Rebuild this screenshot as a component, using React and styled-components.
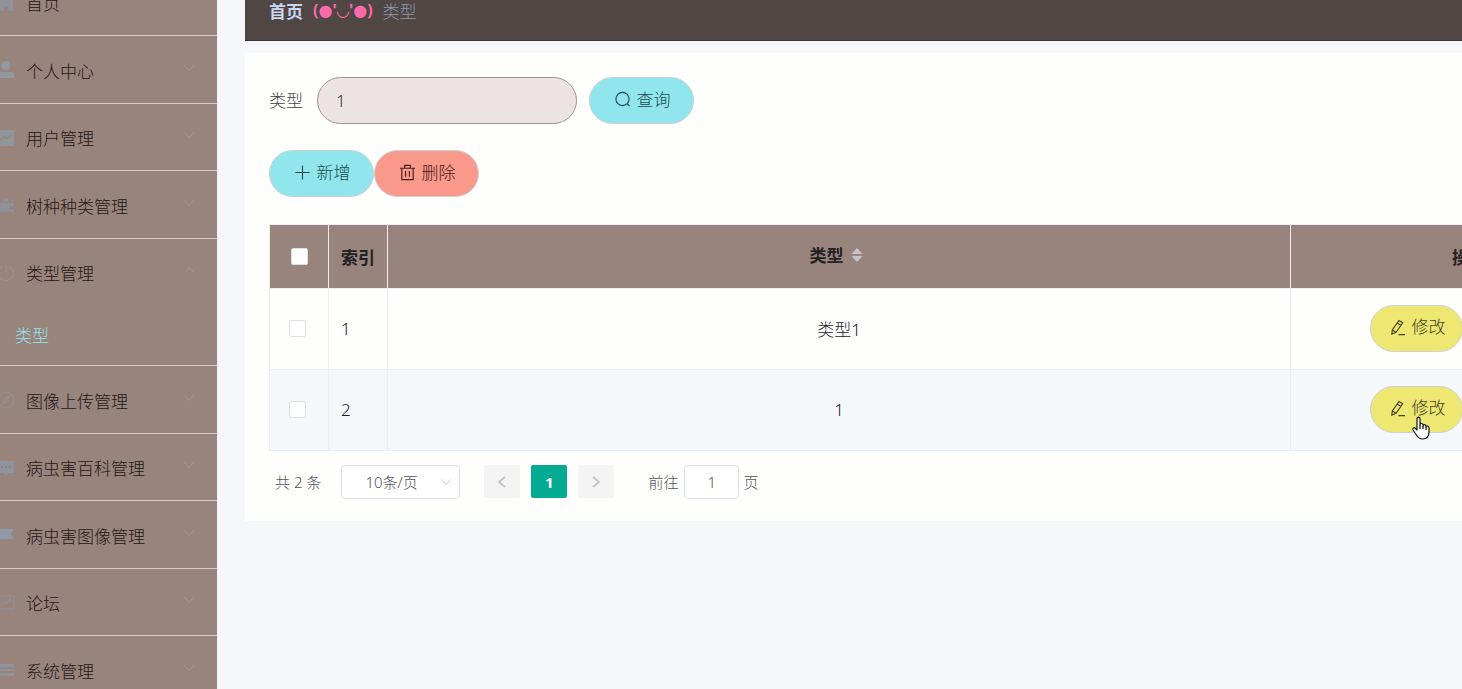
import React from "react";
import styled, { createGlobalStyle, css } from "styled-components";

const colors = {
  brown: "#99837d",
  bar: "#504644",
  aqua: "#90e6ec",
  coral: "#f8998c",
  yellow: "#eee873",
  green: "#02ab92",
  page: "#f6f7fa",
  card: "#fefefd",
  line: "#ebeef5",
};

const GlobalStyle = createGlobalStyle`
  *, *::before, *::after { box-sizing: border-box; }
  body {
    margin: 0;
    overflow: hidden;
    background: ${colors.page};
    color: #222;
    font-family: "Noto Sans", "Noto Sans CJK SC", sans-serif;
    font-size: 17px;
    font-weight: 300;
  }
  button, input, select { font: inherit; color: inherit; }
  svg { display: block; flex: none; }
`;

/* ---------- layout ---------- */

const Viewport = styled.div`
  height: 100vh;
  overflow: hidden;
`;

const Shell = styled.div`
  display: flex;
  width: calc(100% + 210px);
  min-height: 100vh;
`;

const Sidebar = styled.nav`
  flex: none;
  width: 217px;
  height: 100vh;
  overflow: hidden;
  background: ${colors.brown};
`;

const Main = styled.main`
  flex: 1;
  min-width: 0;
  padding-left: 28px;
`;

/* ---------- sidebar ---------- */

const Menu = styled.ul`
  list-style: none;
  margin: -31px 0 0;
  padding: 0;
`;

const MenuItem = styled.li`
  border-bottom: 1px solid #d6cac6;
`;

const MenuLink = styled.a`
  display: flex;
  align-items: center;
  gap: 11px;
  height: ${(p) => (p.$tall ? 67 : 66)}px;
  padding: 1px 23px 0 0;
  margin-left: -3px;
  color: #1f1715;
  text-decoration: none;
  white-space: nowrap;

  > svg:first-child { color: ${(p) => p.$tint}; }
  > svg:last-child { margin: -5px 0 0 auto; color: #a59692; }
`;

const SubLink = styled.a`
  display: flex;
  align-items: center;
  height: 60px;
  padding: 0 0 2px 15px;
  color: ${colors.aqua};
  text-decoration: none;
`;

/* ---------- header ---------- */

const Breadcrumb = styled.header`
  display: flex;
  align-items: center;
  height: 41px;
  padding: 0 24px 20px;
  background: ${colors.bar};
  border-bottom: 1px solid #403635;
  color: #8d99ab;
  white-space: nowrap;
`;

const HomeLink = styled.a`
  color: #c9d6f2;
  font-weight: 700;
  text-decoration: none;
`;

const Face = styled.span`
  margin: 0 10px;
  color: #fb6bab;
  font-family: "Noto Sans", "DejaVu Sans", sans-serif;
  font-size: 16px;
  font-weight: 700;
`;

/* ---------- card ---------- */

const Card = styled.section`
  margin-top: 12px;
  padding: 24px 24px 22px;
  background: ${colors.card};
`;

const Toolbar = styled.div`
  display: flex;
  align-items: center;
  height: 47px;
  margin-bottom: ${(p) => p.$below}px;
`;

const FieldLabel = styled.label`
  margin-right: 14px;
  padding-bottom: 2px;
  color: #444;
`;

const SearchInput = styled.input`
  width: 260px;
  height: 47px;
  margin-right: 12px;
  padding: 0 18px 1px;
  border: 1px solid #a3928f;
  border-radius: 24px;
  background: #ece4e3;
  color: #333;
  outline: none;
`;

const PillButton = styled.button`
  display: inline-flex;
  align-items: center;
  justify-content: center;
  gap: 6px;
  width: ${(p) => p.$width}px;
  height: 47px;
  padding: 0 0 2px 1px;
  border: 1px solid #cfcfd6;
  border-radius: 24px;
  background: ${(p) => p.$fill};
  color: ${(p) => p.$ink};
  line-height: 24px;
  white-space: nowrap;
  cursor: pointer;
`;

const Table = styled.table`
  width: 100%;
  table-layout: fixed;
  border-collapse: collapse;
  border: 1px solid ${colors.line};
`;

const HeadCell = styled.th`
  height: 64px;
  padding: 0 ${(p) => p.$pad || 0}px;
  border: 1px solid ${colors.line};
  border-bottom: 0;
  background: ${colors.brown};
  text-align: ${(p) => p.$align || "center"};
  font-weight: 700;
  white-space: nowrap;
`;

const Cell = styled.td`
  position: relative;
  height: 81px;
  padding: 0 0 2px ${(p) => p.$pad || 0}px;
  border: 1px solid ${colors.line};
  text-align: ${(p) => p.$align || "center"};
`;

const Row = styled.tr`
  background: ${(p) => (p.$striped ? "#f5f8fa" : "transparent")};
`;

const Check = styled.input`
  appearance: none;
  display: block;
  width: 17px;
  height: 17px;
  margin: 0 0 0 ${(p) => p.$inset}px;
  border: 1px solid #dcdfe6;
  border-radius: 2px;
  background: #fff;
`;

const SortButton = styled.button`
  display: inline-flex;
  align-items: center;
  gap: 7px;
  padding: 0 6px 4px 0;
  border: 0;
  background: none;
  font-weight: 700;
`;

const Pointer = styled.svg`
  position: absolute;
  left: 120px;
  top: 46px;
`;

/* ---------- pagination ---------- */

const Pagination = styled.div`
  display: flex;
  align-items: center;
  height: 35px;
  margin-top: 13px;
  padding-left: 6px;
  color: #505256;
  font-size: 15px;
  white-space: nowrap;
`;

const boxed = css`
  height: 34px;
  border: 1px solid #dcdfe6;
  border-radius: 4px;
  background: #fff;
  outline: none;
`;

const SizeWrap = styled.span`
  display: grid;
  align-items: center;
  margin: 0 24px 0 20px;
  color: #c0c4cc;

  > * { grid-area: 1 / 1; }
  > svg { justify-self: end; margin-right: 9px; pointer-events: none; }
`;

const SizeSelect = styled.select`
  ${boxed}
  appearance: none;
  width: 119px;
  padding: 0 23px;
  color: #505256;
`;

const PageButton = styled.button`
  display: flex;
  align-items: center;
  justify-content: center;
  width: 36px;
  height: 33px;
  margin-right: ${(p) => p.$after}px;
  padding: 0;
  border: 0;
  border-radius: 2px;
  background: ${(p) => (p.$current ? colors.green : "#f4f4f5")};
  color: ${(p) => (p.$current ? "#fff" : "#c0c4cc")};
  font-weight: 700;
`;

const JumpInput = styled.input`
  ${boxed}
  width: 55px;
  margin: 0 4px 0 6px;
  padding: 0;
  text-align: center;
`;

/* ---------- icons ---------- */

const Chevron = ({ d, size = 10, weight = 1 }) => (
  <svg width={size} height={size} viewBox="0 0 10 10" fill="none" stroke="currentColor" strokeWidth={weight} aria-hidden="true">
    <path d={d} />
  </svg>
);
const DOWN = "M0.5 2.5L5 7.5L9.5 2.5";
const UP = "M0.5 7.5L5 2.5L9.5 7.5";
const LEFT = "M7.5 0.8L2.5 5L7.5 9.2";
const RIGHT = "M2.5 0.8L7.5 5L2.5 9.2";

const Solid = ({ children }) => (
  <svg width="18" height="18" viewBox="0 0 18 18" fill="currentColor" aria-hidden="true">{children}</svg>
);
const Outline = ({ children, size = 18 }) => (
  <svg width={size} height={size} viewBox="0 0 18 18" fill="none" stroke="currentColor" strokeWidth="1.2" aria-hidden="true">{children}</svg>
);

const icons = {
  home: <Solid><path d="M9 1L0.500 8.500H3V17H7V12H11V17H16V8.500H17.500L14.500 5.700V2H12V3.500Z" /></Solid>,
  user: <Solid><circle cx="9" cy="4.500" r="4.500" /><path d="M0.500 17V15C0.500 12 3 11 5 11H13C15 11 17.500 12 17.500 15V17Z" /></Solid>,
  trend: <Solid><path fillRule="evenodd" d="M1 1H17V17H1ZM3.500 11.500L7 8L10 10.500L15 6L14.200 5L10 8.800L7 6.500L2.800 10.500Z" /></Solid>,
  wallet: <Solid><path d="M1 7H17V10H12.500V13H17V16H1ZM4 5.500L10 2L12.500 5.500ZM14 4H16V5.500H14Z" /></Solid>,
  power: <Outline><path d="M9 1V8M5.500 2.500A7.500 7.500 0 1 0 12.500 2.500" /></Outline>,
  compass: <Outline><circle cx="9" cy="9" r="8" /><path d="M12.500 5L10 10L5.500 13L8 8Z" /></Outline>,
  chat: <Solid><path fillRule="evenodd" d="M1 2H17V14H11L9 17L7 14H1ZM4 7V9H6V7ZM8 7V9H10V7ZM12 7V9H14V7Z" /></Solid>,
  flag: <Solid><path d="M1 1H2.500V3H17L13.500 8L17 13H2.500V17H1Z" /></Solid>,
  board: <Outline><rect x="1" y="2" width="16" height="13" /><path d="M4 11L7 8L9 10L14 5M11 5H14V8" /></Outline>,
  list: <Solid><path d="M1 3H17V6H1ZM1 8H17V10H1ZM1 12H17V15H1Z" /></Solid>,
};

const SearchIcon = () => <Outline size={17}><circle cx="9" cy="8.500" r="7" /><path d="M14 13.500L16.500 16" /></Outline>;
const PlusIcon = () => <Outline size={17}><path d="M9 1.500V16.500M1.500 9H16.500" /></Outline>;
const TrashIcon = () => <Outline size={17}><path d="M1 4.500H17M3 4.500V16.500H15V4.500M6 4V1.500H12V4M7 7.500V13.500M11 7.500V13.500" /></Outline>;
const EditIcon = () => <Outline size={17}><path d="M10.500 1.500L14.500 4L7.500 14L3 16L3.500 11.500ZM8.700 4.200L12.700 6.800M3.500 11.500L7.500 14M10 16.500H17" /></Outline>;
const SortIcon = () => (
  <svg width="12" height="16" viewBox="0 0 12 16" fill="#c5c4cc" aria-hidden="true">
    <path d="M6 1L11.500 7H0.500ZM6 15L0.500 9H11.500Z" />
  </svg>
);
const HandPointer = () => (
  <Pointer width="20" height="24" viewBox="0 0 20 24" fill="#fff" stroke="#111" strokeWidth="1.2" strokeLinejoin="round" aria-hidden="true">
    <path d="M6 14V3C6 0.500 9 0.500 9 3V9C9 7 12 7 12 9V10C12 8 15 8.300 15 10.300V11C15 9.500 18 9.500 18 12V16C18 20 16 23 11.500 23C8 23 6.500 21 5 18.500L2 14C1 12 3.500 11 4.500 12.500Z" />
    <path d="M9 9V13M12 10V13M15 11V14" />
  </Pointer>
);

/* ---------- data ---------- */

const menu = [
  { label: "首页", icon: "home", tint: "#8f9299", leaf: true },
  { label: "个人中心", icon: "user", tint: "#8f999e" },
  { label: "用户管理", icon: "trend", tint: "#8e989b" },
  { label: "树种种类管理", icon: "wallet", tint: "#8f9299" },
  { label: "类型管理", icon: "power", tint: "#a08f8d", children: ["类型"] },
  { label: "图像上传管理", icon: "compass", tint: "#958f93" },
  { label: "病虫害百科管理", icon: "chat", tint: "#8c959e" },
  { label: "病虫害图像管理", icon: "flag", tint: "#8f9aa8" },
  { label: "论坛", icon: "board", tint: "#958f93" },
  { label: "系统管理", icon: "list", tint: "#8f959d" },
];

const rows = ["类型1", "1"];

export default function App() {
  return (
    <Viewport>
      <GlobalStyle />
      <Shell>
        <Sidebar>
          <Menu>
            {menu.map((item, i) => (
              <MenuItem key={item.label}>
                <MenuLink href="#" $tint={item.tint} $tall={i % 2 === 1}>
                  {icons[item.icon]}
                  <span>{item.label}</span>
                  {!item.leaf && <Chevron d={item.children ? UP : DOWN} />}
                </MenuLink>
                {item.children?.map((child) => <SubLink href="#" key={child}>{child}</SubLink>)}
              </MenuItem>
            ))}
          </Menu>
        </Sidebar>

        <Main>
          <Breadcrumb>
            <HomeLink href="#">首页</HomeLink>
            <Face>(●'◡'●)</Face>
            <span>类型</span>
          </Breadcrumb>

          <Card>
            <Toolbar $below={26}>
              <FieldLabel htmlFor="type">类型</FieldLabel>
              <SearchInput id="type" defaultValue="1" />
              <PillButton $width={105} $fill={colors.aqua} $ink="#1f4a50"><SearchIcon />查询</PillButton>
            </Toolbar>
            <Toolbar $below={27}>
              <PillButton $width={105} $fill={colors.aqua} $ink="#1f4a50"><PlusIcon />新增</PillButton>
              <PillButton $width={105} $fill={colors.coral} $ink="#4a1c17"><TrashIcon />删除</PillButton>
            </Toolbar>

            <Table>
              <colgroup>
                <col style={{ width: 59 }} />
                <col style={{ width: 59 }} />
                <col />
                <col style={{ width: 357 }} />
              </colgroup>
              <thead>
                <tr>
                  <HeadCell><Check type="checkbox" $inset={21} aria-label="全选" /></HeadCell>
                  <HeadCell $align="left" $pad={12}>索引</HeadCell>
                  <HeadCell><SortButton>类型<SortIcon /></SortButton></HeadCell>
                  <HeadCell>操作</HeadCell>
                </tr>
              </thead>
              <tbody>
                {rows.map((name, i) => (
                  <Row key={name} $striped={i % 2 === 1}>
                    <Cell><Check type="checkbox" $inset={19} aria-label={name} /></Cell>
                    <Cell $align="left" $pad={12}>{i + 1}</Cell>
                    <Cell>{name}</Cell>
                    <Cell $align="left" $pad={79}>
                      <PillButton $width={93} $fill={colors.yellow} $ink="#45421f"><EditIcon />修改</PillButton>
                      {i === 1 && <HandPointer />}
                    </Cell>
                  </Row>
                ))}
              </tbody>
            </Table>

            <Pagination>
              <span>共 2 条</span>
              <SizeWrap>
                <SizeSelect aria-label="每页条数" defaultValue="10">
                  <option value="10">10条/页</option>
                </SizeSelect>
                <Chevron d={DOWN} />
              </SizeWrap>
              <PageButton $after={11} aria-label="上一页" disabled><Chevron d={LEFT} size={12} weight={1.5} /></PageButton>
              <PageButton $after={11} $current>1</PageButton>
              <PageButton $after={34} aria-label="下一页" disabled><Chevron d={RIGHT} size={12} weight={1.5} /></PageButton>
              <label htmlFor="jump">前往</label>
              <JumpInput id="jump" defaultValue="1" />
              <span>页</span>
            </Pagination>
          </Card>
        </Main>
      </Shell>
    </Viewport>
  );
}
